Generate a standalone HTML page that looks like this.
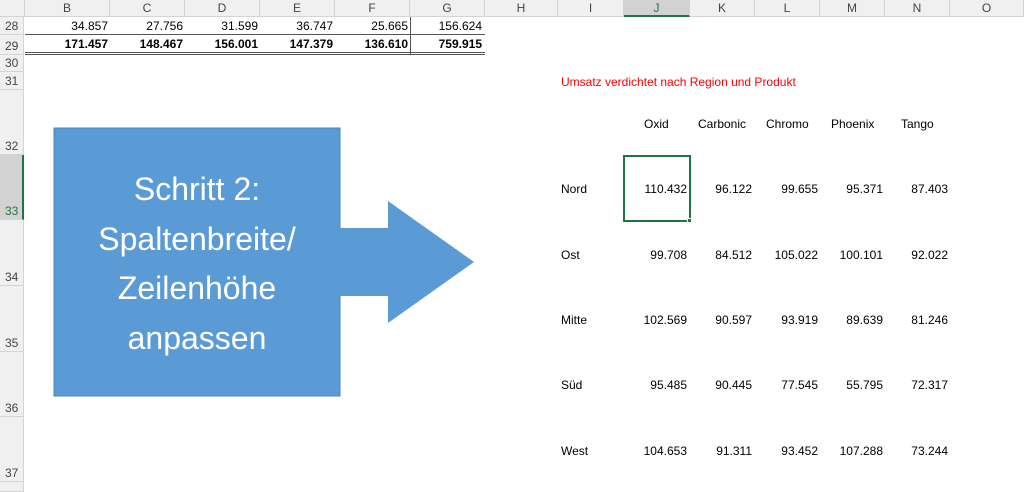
<!DOCTYPE html>
<html><head><meta charset="utf-8"><style>
*{margin:0;padding:0;box-sizing:border-box}
body{width:1024px;height:488px;overflow:hidden;background:#fff;font-family:"Liberation Sans",Calibri,sans-serif;font-size:12px;color:#000;position:relative}
.a{position:absolute;white-space:nowrap}
.hdr{position:absolute;top:0;height:17px;background:#f0f0f0;border-bottom:1px solid #d4d4d4;border-right:1px solid #d4d4d4;text-align:center;line-height:17px;font-size:12px;color:#444}
.rh{position:absolute;left:0;width:24px;background:#f0f0f0;border-bottom:1px solid #d4d4d4;border-right:1px solid #d4d4d4;font-size:12px;color:#444;padding-left:5px;display:flex;align-items:flex-end;padding-bottom:1px}
.r{text-align:right}
</style></head><body>
<div class="hdr" style="left:0;width:25px"></div>
<div class="hdr" style="left:25px;width:85px">B</div>
<div class="hdr" style="left:110px;width:75px">C</div>
<div class="hdr" style="left:185px;width:75px">D</div>
<div class="hdr" style="left:260px;width:75px">E</div>
<div class="hdr" style="left:335px;width:75px">F</div>
<div class="hdr" style="left:410px;width:75px">G</div>
<div class="hdr" style="left:485px;width:73px">H</div>
<div class="hdr" style="left:558px;width:66px">I</div>
<div class="hdr" style="left:624px;width:66px;background:#d2d2d2;border-bottom:2px solid #217346;color:#217346">J</div>
<div class="hdr" style="left:690px;width:65px">K</div>
<div class="hdr" style="left:755px;width:65px">L</div>
<div class="hdr" style="left:820px;width:65px">M</div>
<div class="hdr" style="left:885px;width:65px">N</div>
<div class="hdr" style="left:950px;width:74px">O</div>

<div class="rh" style="top:17px;height:18px">28</div>
<div class="rh" style="top:35px;height:20px">29</div>
<div class="rh" style="top:55px;height:17px">30</div>
<div class="rh" style="top:72px;height:18px">31</div>
<div class="rh" style="top:90px;height:65px">32</div>
<div class="rh" style="top:155px;height:65px;background:#d2d2d2;border-right:2px solid #217346;color:#217346">33</div>
<div class="rh" style="top:220px;height:66px">34</div>
<div class="rh" style="top:286px;height:66px">35</div>
<div class="rh" style="top:352px;height:65px">36</div>
<div class="rh" style="top:417px;height:65px">37</div>
<div class="rh" style="top:482px;height:10px"></div>

<div class="a" style="left:410px;top:17px;width:1px;height:38px;background:#555"></div>
<div class="a" style="left:25px;top:34px;width:460px;height:1px;background:#555"></div>
<div class="a" style="left:25px;top:52px;width:460px;height:3px;border-top:1px solid #555;border-bottom:1px solid #555"></div>

<div class="a r" style="left:25px;top:19px;width:83px">34.857</div>
<div class="a r" style="left:110px;top:19px;width:73px">27.756</div>
<div class="a r" style="left:185px;top:19px;width:73px">31.599</div>
<div class="a r" style="left:260px;top:19px;width:73px">36.747</div>
<div class="a r" style="left:335px;top:19px;width:73px">25.665</div>
<div class="a r" style="left:410px;top:19px;width:72px">156.624</div>
<div style="font-weight:bold">
<div class="a r" style="left:25px;top:37px;width:83px">171.457</div>
<div class="a r" style="left:110px;top:37px;width:73px">148.467</div>
<div class="a r" style="left:185px;top:37px;width:73px">156.001</div>
<div class="a r" style="left:260px;top:37px;width:73px">147.379</div>
<div class="a r" style="left:335px;top:37px;width:73px">136.610</div>
<div class="a r" style="left:410px;top:37px;width:72px">759.915</div>
</div>

<svg class="a" style="left:0;top:0" width="1024" height="488">
<rect x="54" y="128" width="286" height="268" fill="#5b9bd5" stroke="#4a86c0" stroke-width="1"/>
<polygon points="339,228 388,228 388,201 474,262 388,323 388,296 339,296" fill="#5b9bd5"/>
</svg>
<div class="a" style="left:54px;top:165px;width:286px;text-align:center;color:#fff;font-size:32px;line-height:49.5px;white-space:normal">Schritt 2:<br>Spaltenbreite/<br>Zeilenhöhe<br>anpassen</div>

<div class="a" style="left:561px;top:75px;color:#ff0000">Umsatz verdichtet nach Region und Produkt</div>
<div class="a" style="left:644px;top:117px">Oxid</div>
<div class="a" style="left:698px;top:117px">Carbonic</div>
<div class="a" style="left:766px;top:117px">Chromo</div>
<div class="a" style="left:831px;top:117px">Phoenix</div>
<div class="a" style="left:901px;top:117px">Tango</div>

<div class="a" style="left:623px;top:155px;width:68px;height:67px;border:2px solid #217346"></div>
<div class="a" style="left:687px;top:218px;width:5px;height:5px;background:#217346;border:1px solid #fff"></div>

<div class="a" style="left:561px;top:182px">Nord</div>
<div class="a" style="left:561px;top:248px">Ost</div>
<div class="a" style="left:561px;top:313px">Mitte</div>
<div class="a" style="left:561px;top:378px">Süd</div>
<div class="a" style="left:561px;top:444px">West</div>

<div class="a r" style="left:600px;top:182px;width:87px">110.432</div>
<div class="a r" style="left:680px;top:182px;width:72px">96.122</div>
<div class="a r" style="left:740px;top:182px;width:78px">99.655</div>
<div class="a r" style="left:800px;top:182px;width:83px">95.371</div>
<div class="a r" style="left:860px;top:182px;width:88px">87.403</div>

<div class="a r" style="left:600px;top:248px;width:87px">99.708</div>
<div class="a r" style="left:680px;top:248px;width:72px">84.512</div>
<div class="a r" style="left:740px;top:248px;width:78px">105.022</div>
<div class="a r" style="left:800px;top:248px;width:83px">100.101</div>
<div class="a r" style="left:860px;top:248px;width:88px">92.022</div>

<div class="a r" style="left:600px;top:313px;width:87px">102.569</div>
<div class="a r" style="left:680px;top:313px;width:72px">90.597</div>
<div class="a r" style="left:740px;top:313px;width:78px">93.919</div>
<div class="a r" style="left:800px;top:313px;width:83px">89.639</div>
<div class="a r" style="left:860px;top:313px;width:88px">81.246</div>

<div class="a r" style="left:600px;top:378px;width:87px">95.485</div>
<div class="a r" style="left:680px;top:378px;width:72px">90.445</div>
<div class="a r" style="left:740px;top:378px;width:78px">77.545</div>
<div class="a r" style="left:800px;top:378px;width:83px">55.795</div>
<div class="a r" style="left:860px;top:378px;width:88px">72.317</div>

<div class="a r" style="left:600px;top:444px;width:87px">104.653</div>
<div class="a r" style="left:680px;top:444px;width:72px">91.311</div>
<div class="a r" style="left:740px;top:444px;width:78px">93.452</div>
<div class="a r" style="left:800px;top:444px;width:83px">107.288</div>
<div class="a r" style="left:860px;top:444px;width:88px">73.244</div>
</body></html>
